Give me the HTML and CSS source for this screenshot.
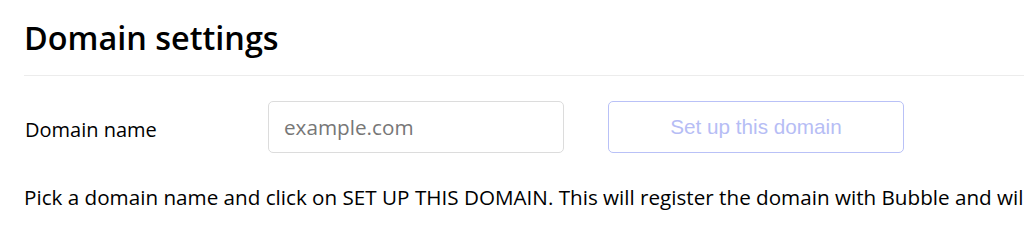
FILE: index.html
```html
<!DOCTYPE html>
<html>
<head>
<meta charset="utf-8">
<link rel="stylesheet" href="styles.css">
</head>
<body>
<div class="page">
  <h1 class="title">Domain settings</h1>
  <div class="divider"></div>
  <div class="row">
    <div class="label">Domain name</div>
    <div class="input"><span class="placeholder">example.com</span></div>
    <div class="button">Set up this domain</div>
  </div>
  <p class="desc">Pick a domain name and click on SET UP THIS DOMAIN. This will register the domain with Bubble and will allow you to set up the DNS records.</p>
</div>
</body>
</html>
```
FILE: styles.css
```css
html, body {
  margin: 0;
  padding: 0;
  background: #fff;
  overflow: hidden;
}
.page {
  padding-left: 24px;
  font-family: "Open Sans", "Liberation Sans", sans-serif;
  color: #000;
  overflow: hidden;
}
.title {
  margin: 0;
  padding-top: 15px;
  font-size: 32.4px;
  font-weight: 600;
  line-height: 44px;
  height: 44px;
}
.divider {
  margin-top: 16px;
  height: 1px;
  background: #ececec;
}
.row {
  display: flex;
  align-items: center;
  margin-top: 25px;
  height: 52px;
}
.label {
  width: 243px;
  font-size: 20px;
  padding-left: 1px;
  padding-top: 4px;
}
.input {
  box-sizing: border-box;
  width: 296px;
  height: 52px;
  border: 1px solid #dcdcdc;
  border-radius: 5px;
  display: flex;
  align-items: center;
  padding-left: 15px;
}
.placeholder {
  font-size: 20.7px;
  color: #777;
}
.button {
  box-sizing: border-box;
  margin-left: 44px;
  width: 296px;
  height: 52px;
  border: 1px solid #b9c1f7;
  border-radius: 5px;
  display: flex;
  align-items: center;
  justify-content: center;
  font-family: "Liberation Sans", Arial, sans-serif;
  font-size: 20.7px;
  color: #b6bdf5;
}
.desc {
  margin: 30px 0 0;
  font-size: 20.65px;
  white-space: nowrap;
  overflow: hidden;
}
```
